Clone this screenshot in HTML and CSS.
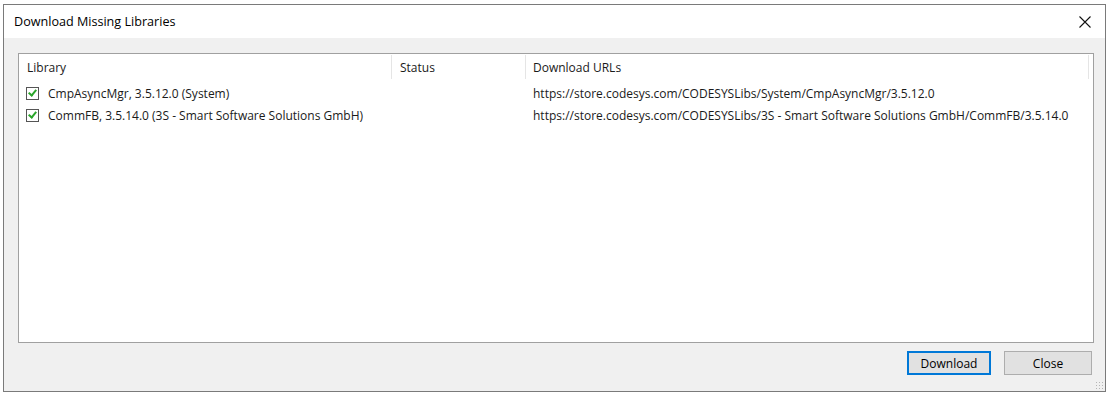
FILE: index.html
```html
<!DOCTYPE html>
<html>
<head>
  <title>Download Missing Libraries</title>
  <link rel="stylesheet" href="styles.css">
</head>
<body>
  <div class="window">
    <div class="titlebar">
      <span class="title">Download Missing Libraries</span>
      <span class="close-x">
        <svg width="12" height="12" viewBox="0 0 12 12"><path d="M0.5 0.5 L11.5 11.5 M11.5 0.5 L0.5 11.5" stroke="#111" stroke-width="1.1" fill="none"/></svg>
      </span>
    </div>

    <div class="dialog-body">
      <div class="listview">
        <div class="lv-header">
          <div class="col col-lib">Library</div>
          <div class="col col-status">Status</div>
          <div class="col col-url">Download URLs</div>
        </div>
        <div class="lv-row">
          <div class="col col-lib"><span class="check"></span>CmpAsyncMgr, 3.5.12.0 (System)</div>
          <div class="col col-status"></div>
          <div class="col col-url">https://store.codesys.com/CODESYSLibs/System/CmpAsyncMgr/3.5.12.0</div>
        </div>
        <div class="lv-row">
          <div class="col col-lib"><span class="check"></span>CommFB, 3.5.14.0 (3S - Smart Software Solutions GmbH)</div>
          <div class="col col-status"></div>
          <div class="col col-url">https://store.codesys.com/CODESYSLibs/3S - Smart Software Solutions GmbH/CommFB/3.5.14.0</div>
        </div>
      </div>

      <div class="button-row">
        <button class="btn btn-default">Download</button>
        <button class="btn btn-close">Close</button>
      </div>
      <div class="grip"></div>
    </div>
  </div>
</body>
</html>
```

FILE: styles.css
```css
body {
  margin: 0;
  padding: 0;
  background-color: #fff;
  font-family: "Open Sans", "Noto Sans", sans-serif;
  font-size: 12px;
  color: #1a1a1a;
}

.window {
  margin: 4px 0 0 3px;
  width: 1101px;
  height: 386px;
  border: 1px solid #7a7a7a;
  background-color: #f0f0f0;
  display: flex;
  flex-direction: column;
}

.titlebar {
  height: 33px;
  background-color: #fff;
  display: flex;
  align-items: center;
  justify-content: space-between;
  padding: 0 14px 0 10px;
  flex-shrink: 0;
}

.title {
  font-size: 12.6px;
  color: #000;
}

.close-x {
  display: flex;
  align-items: center;
}

.dialog-body {
  flex: 1;
  padding: 15px 11px 0 14px;
  display: flex;
  flex-direction: column;
  position: relative;
}

.listview {
  height: 288px;
  border: 1px solid #a0a0a0;
  background-color: #fff;
}

.lv-header {
  display: flex;
  height: 28px;
  align-items: stretch;
}

.lv-header .col {
  display: flex;
  align-items: center;
  border-right: 1px solid #e5e5e5;
  margin: 1px 0 3px;
}

.lv-row {
  display: flex;
  height: 22px;
  align-items: center;
}

.col {
  padding-left: 8px;
  box-sizing: border-box;
  white-space: nowrap;
}

.col-lib {
  width: 373px;
  display: flex;
  align-items: center;
}

.col-status {
  width: 134px;
}

.col-url {
  width: 563px;
  padding-left: 7px;
}

.check {
  width: 11px;
  height: 11px;
  border: 1px solid #555;
  margin: 0 9px 0 -1px;
  position: relative;
  flex-shrink: 0;
}

.check::after {
  content: "";
  position: absolute;
  left: 3px;
  top: 0px;
  width: 3px;
  height: 6px;
  border: solid #2aa52a;
  border-width: 0 2px 2px 0;
  transform: rotate(40deg);
}

.button-row {
  display: flex;
  justify-content: flex-end;
  gap: 13px;
  margin-top: 8px;
  padding-right: 2px;
}

.btn {
  height: 24px;
  font-family: "Open Sans", "Noto Sans", sans-serif;
  font-size: 12px;
  color: #000;
  background-color: #e1e1e1;
  border: 1px solid #adadad;
  padding: 0;
}

.btn-default {
  width: 84px;
  border: 2px solid #0078d7;
}

.btn-close {
  width: 88px;
}

.grip {
  position: absolute;
  right: 2px;
  bottom: 2px;
  width: 8px;
  height: 8px;
  background-image: radial-gradient(#b5b5b5 40%, transparent 45%);
  background-size: 3px 3px;
}
```
